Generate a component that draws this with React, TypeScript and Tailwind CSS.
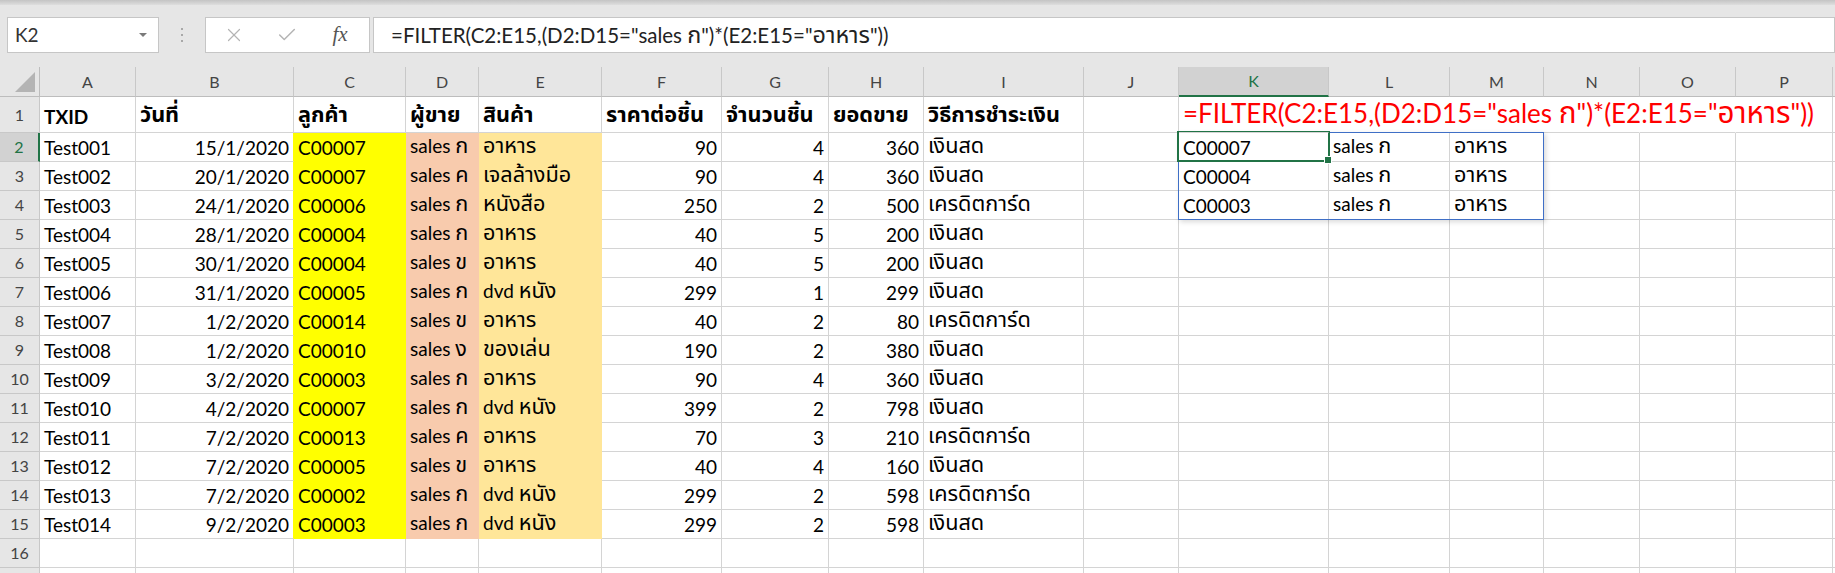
import { X, Check } from "lucide-react";

const letters = ["A", "B", "C", "D", "E", "F", "G", "H", "I", "J", "K", "L", "M", "N", "O", "P", ""];

const head = ["TXID", "วันที่", "ลูกค้า", "ผู้ขาย", "สินค้า", "ราคาต่อชิ้น", "จำนวนชิ้น", "ยอดขาย", "วิธีการชำระเงิน"];

const data = [
  ["Test001", "15/1/2020", "C00007", "sales ก", "อาหาร", "90", "4", "360", "เงินสด"],
  ["Test002", "20/1/2020", "C00007", "sales ค", "เจลล้างมือ", "90", "4", "360", "เงินสด"],
  ["Test003", "24/1/2020", "C00006", "sales ก", "หนังสือ", "250", "2", "500", "เครดิตการ์ด"],
  ["Test004", "28/1/2020", "C00004", "sales ก", "อาหาร", "40", "5", "200", "เงินสด"],
  ["Test005", "30/1/2020", "C00004", "sales ข", "อาหาร", "40", "5", "200", "เงินสด"],
  ["Test006", "31/1/2020", "C00005", "sales ก", "dvd หนัง", "299", "1", "299", "เงินสด"],
  ["Test007", "1/2/2020", "C00014", "sales ข", "อาหาร", "40", "2", "80", "เครดิตการ์ด"],
  ["Test008", "1/2/2020", "C00010", "sales ง", "ของเล่น", "190", "2", "380", "เงินสด"],
  ["Test009", "3/2/2020", "C00003", "sales ก", "อาหาร", "90", "4", "360", "เงินสด"],
  ["Test010", "4/2/2020", "C00007", "sales ก", "dvd หนัง", "399", "2", "798", "เงินสด"],
  ["Test011", "7/2/2020", "C00013", "sales ค", "อาหาร", "70", "3", "210", "เครดิตการ์ด"],
  ["Test012", "7/2/2020", "C00005", "sales ข", "อาหาร", "40", "4", "160", "เงินสด"],
  ["Test013", "7/2/2020", "C00002", "sales ก", "dvd หนัง", "299", "2", "598", "เครดิตการ์ด"],
  ["Test014", "9/2/2020", "C00003", "sales ก", "dvd หนัง", "299", "2", "598", "เงินสด"],
];

const spill = [
  ["C00007", "sales ก", "อาหาร"],
  ["C00004", "sales ก", "อาหาร"],
  ["C00003", "sales ก", "อาหาร"],
];

const formula = '=FILTER(C2:E15,(D2:D15="sales ก")*(E2:E15="อาหาร"))';

// ฟอนต์ไทยที่ fallback ตัวเล็กกว่าในต้นฉบับ เลยขยายเฉพาะช่วงอักษรไทย
function Txt({ s }: { s: string }) {
  const parts = s.split(/([\u0E00-\u0E7F]+)/);
  return (
    <span className="whitespace-pre">
      {parts.map((p, i) =>
        /[\u0E00-\u0E7F]/.test(p) ? (
          <span key={i} className="text-[1.14em]">
            {p}
          </span>
        ) : (
          p
        )
      )}
    </span>
  );
}

// สีพื้นของคอลัมน์ C, D, E แถว 2-15
function fill(row: number, col: number) {
  if (row < 2 || row > 15) return "";
  if (col === 2) return "bg-[#ffff00] border-[#ffff00]";
  if (col === 3) return "bg-[#f8cbad] border-[#f8cbad]";
  if (col === 4) return "bg-[#ffe699] border-[#ffe699]";
  return "";
}

function cellText(row: number, col: number): string {
  if (row === 1) {
    if (col < 9) return head[col];
    if (col === 10) return formula;
    return "";
  }
  if (row >= 2 && row <= 15 && col < 9) return data[row - 2][col];
  if (row >= 2 && row <= 4 && col >= 10 && col <= 12) return spill[row - 2][col - 10];
  return "";
}

function Cell({ row, col }: { row: number; col: number }) {
  const text = cellText(row, col);
  const f = fill(row, col);
  const right = row >= 2 && (col === 1 || col === 5 || col === 6 || col === 7);
  let border = f || "border-[#d4d4d4]";
  if (!f && col === 1 && row >= 2 && row <= 15) border = "border-[#d4d4d4] border-r-[#ffff00]";
  if (row === 1 && col >= 11 && col <= 14) border = "border-[#d4d4d4] border-r-transparent";

  if (row === 1 && col === 10) {
    return (
      <div className="relative z-10 flex items-end overflow-visible whitespace-nowrap border-b border-r border-[#d4d4d4] border-r-transparent pb-[5px] pl-[4px] text-[26px] leading-none text-[#ff0000]">
        <Txt s={text} />
      </div>
    );
  }

  return (
    <div
      className={`flex items-end overflow-visible whitespace-nowrap border-b border-r px-[4px] leading-none ${border} ${
        row === 1 ? "pb-[6px] font-bold" : "pb-[4px]"
      } ${right ? "justify-end" : "justify-start"}`}
    >
      <Txt s={text} />
    </div>
  );
}

function FormulaBar() {
  return (
    <div className="flex h-[62px] items-start bg-[#e6e6e6] pl-[7px] pt-[12px]">
      <div className="flex h-[36px] w-[152px] items-center justify-between border border-[#c6c6c6] bg-white pl-[7px] pr-[11px] text-[19px] text-[#333]">
        <span>K2</span>
        <span className="h-0 w-0 border-x-[4px] border-t-[4px] border-x-transparent border-t-[#7a7a7a]" />
      </div>
      <div className="flex h-[36px] w-[46px] flex-col items-center justify-center gap-[4px]">
        <span className="h-[2px] w-[2px] bg-[#a8a8a8]" />
        <span className="h-[2px] w-[2px] bg-[#a8a8a8]" />
        <span className="h-[2px] w-[2px] bg-[#a8a8a8]" />
      </div>
      <div className="flex h-[36px] w-[165px] items-center border border-[#c6c6c6] bg-white">
        <div className="flex w-[56px] justify-center">
          <X size={22} strokeWidth={1.3} className="text-[#b4b4b4]" />
        </div>
        <div className="flex w-[50px] justify-center">
          <Check size={22} strokeWidth={1.6} className="text-[#b4b4b4]" />
        </div>
        <div className="flex w-[56px] justify-center font-['Liberation_Serif',serif] text-[21px] italic text-[#555]">
          fx
        </div>
      </div>
      <div className="ml-[3px] flex h-[36px] flex-1 items-center whitespace-nowrap border border-[#c6c6c6] bg-white pl-[17px] text-[20.5px] text-[#222]">
        <Txt s={formula} />
      </div>
    </div>
  );
}

export default function App() {
  const rows = Array.from({ length: 17 }, (_, i) => i + 1);
  const cols = Array.from({ length: 17 }, (_, i) => i);

  return (
    <div className="h-[573px] w-[1835px] overflow-hidden bg-white font-['Lato','Noto_Sans_Thai','Noto_Sans',sans-serif] text-[19px] text-black">
      <div className="h-[5px] bg-gradient-to-b from-[#c4c4c4] to-[#dedede]" />
      <FormulaBar />

      <div className="relative grid grid-cols-[40px_96px_158px_112px_73px_123px_120px_107px_95px_160px_95px_150px_121px_94px_96px_96px_97px_1fr] grid-rows-[30px_36px_repeat(15,29px)_29px]">
        {/* มุมซ้ายบน */}
        <div className="relative border-b border-r border-[#bdbdbd] bg-[#e6e6e6]">
          <span className="absolute bottom-[4px] right-[4px] h-0 w-0 border-b-[20px] border-l-[20px] border-b-[#b4b4b4] border-l-transparent" />
        </div>
        {letters.map((l, i) =>
          i === 10 ? (
            <div
              key={l}
              className="flex items-center justify-center border-b-2 border-r border-[#217346] border-r-[#c8c8c8] bg-[#d2d2d2] text-[16px] text-[#217346]"
            >
              {l}
            </div>
          ) : (
            <div
              key={i}
              className="flex items-center justify-center border-b border-r border-[#c8c8c8] border-b-[#bdbdbd] bg-[#e6e6e6] text-[16px] text-[#444]"
            >
              {l}
            </div>
          )
        )}

        {rows.map((r) => (
          <div key={r} className="contents">
            {r === 2 ? (
              <div className="flex items-center justify-center border-b border-r-2 border-[#c8c8c8] border-r-[#217346] bg-[#d2d2d2] text-[16px] text-[#217346]">
                {r}
              </div>
            ) : (
              <div className="flex items-center justify-center border-b border-r border-[#c8c8c8] bg-[#e6e6e6] text-[16px] text-[#444]">
                {r === 17 ? "" : r}
              </div>
            )}
            {cols.map((c) => (
              <Cell key={c} row={r} col={c} />
            ))}
          </div>
        ))}

        {/* ขอบช่วง spill */}
        <div className="pointer-events-none absolute left-[1178px] top-[65px] h-[88px] w-[366px] border border-[#3f6fc6] shadow-[2px_2px_5px_rgba(0,0,0,0.15)]" />
        {/* เซลล์ที่เลือก K2 */}
        <div className="pointer-events-none absolute left-[1177px] top-[64px] h-[31px] w-[153px] border-2 border-[#217346]" />
        <div className="pointer-events-none absolute left-[1324px] top-[89px] h-[8px] w-[8px] border border-white bg-[#217346]" />
      </div>
    </div>
  );
}
